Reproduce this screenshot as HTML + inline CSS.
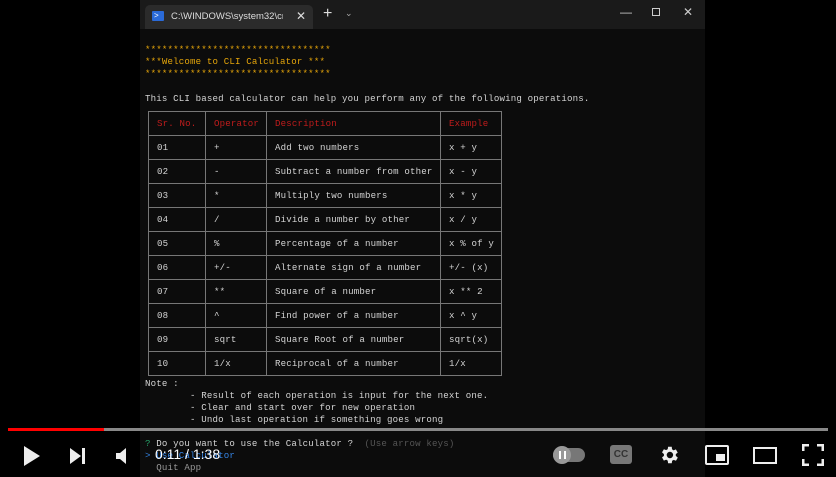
<!DOCTYPE html>
<html><head><meta charset="utf-8"><style>
*{margin:0;padding:0;box-sizing:border-box}
body{width:836px;height:477px;background:#000;overflow:hidden;position:relative;font-family:"Liberation Mono",monospace}
.term{position:absolute;left:140px;top:0;width:565px;height:477px;background:#0c0c0c}
.tabbar{position:absolute;left:140px;top:0;width:565px;height:29px;background:#1a1a1a}
.tab{position:absolute;left:145px;top:5px;width:168px;height:24px;background:#2b2b2b;border-radius:5px 5px 0 0;color:#ddd;font:9.5px "Liberation Sans",sans-serif}
.t{position:absolute;font-size:9.1px;letter-spacing:0.17px;white-space:pre;color:#d4d4d4;line-height:12px}
.y{color:#e5a50a}
.r{color:#c01c1c}
table{position:absolute;left:148px;top:111px;border-collapse:collapse}
td{border:1px solid #777;height:24px;font-size:9.1px;letter-spacing:0.17px;color:#d4d4d4;padding-left:8px;white-space:pre;vertical-align:middle}
.ctl{position:absolute;fill:#eee}
</style></head><body>
<div class="term"></div>
<div class="tabbar"></div>
<div class="tab">
<div style="position:absolute;left:7px;top:6px;width:12px;height:10px;background:#2a6ad8;border-radius:1px;color:#fff;font-size:8px;line-height:10px;padding-left:2px">&gt;</div>
<span style="position:absolute;left:26px;top:6px;width:112px;overflow:hidden;white-space:nowrap">C:\WINDOWS\system32\cmd.</span>
<span style="position:absolute;left:151px;top:4px;font-size:12px">✕</span>
</div>
<span style="position:absolute;left:323px;top:5px;color:#ddd;font:16px 'Liberation Sans',sans-serif">+</span>
<span style="position:absolute;left:345px;top:8px;color:#aaa;font:9px 'Liberation Sans',sans-serif">⌄</span>
<span style="position:absolute;left:620px;top:5px;color:#ccc;font:12px 'Liberation Sans'">—</span>
<div style="position:absolute;left:652px;top:8px;width:8px;height:8px;border:1px solid #ccc"></div>
<span style="position:absolute;left:683px;top:5px;color:#ccc;font:12px 'Liberation Sans'">✕</span>

<div class="t y" style="left:145px;top:44px">*********************************</div>
<div class="t y" style="left:145px;top:56px">***Welcome to CLI Calculator ***</div>
<div class="t y" style="left:145px;top:68px">*********************************</div>
<div class="t" style="left:145px;top:93px">This CLI based calculator can help you perform any of the following operations.</div>

<table>
<tr><td class="r" style="width:57px">Sr. No.</td><td class="r" style="width:61px">Operator</td><td class="r" style="width:174px">Description</td><td class="r" style="width:61px">Example</td></tr>
<tr><td>01</td><td>+</td><td>Add two numbers</td><td>x + y</td></tr>
<tr><td>02</td><td>-</td><td>Subtract a number from other</td><td>x - y</td></tr>
<tr><td>03</td><td>*</td><td>Multiply two numbers</td><td>x * y</td></tr>
<tr><td>04</td><td>/</td><td>Divide a number by other</td><td>x / y</td></tr>
<tr><td>05</td><td>%</td><td>Percentage of a number</td><td>x % of y</td></tr>
<tr><td>06</td><td>+/-</td><td>Alternate sign of a number</td><td>+/- (x)</td></tr>
<tr><td>07</td><td>**</td><td>Square of a number</td><td>x ** 2</td></tr>
<tr><td>08</td><td>^</td><td>Find power of a number</td><td>x ^ y</td></tr>
<tr><td>09</td><td>sqrt</td><td>Square Root of a number</td><td>sqrt(x)</td></tr>
<tr><td>10</td><td>1/x</td><td>Reciprocal of a number</td><td>1/x</td></tr>
</table>

<div class="t" style="left:145px;top:378px">Note :</div>
<div class="t" style="left:145px;top:390px">        - Result of each operation is input for the next one.</div>
<div class="t" style="left:145px;top:402px">        - Clear and start over for new operation</div>
<div class="t" style="left:145px;top:414px">        - Undo last operation if something goes wrong</div>
<div class="t" style="left:145px;top:438px"><span style="color:#26a269">?</span> Do you want to use the Calculator ?  <span style="color:#555">(Use arrow keys)</span></div>
<div class="t" style="left:145px;top:450px;color:#3584e4">&gt; Use Calculator</div>
<div class="t" style="left:145px;top:462px;color:#999">  Quit App</div>

<div style="position:absolute;left:8px;top:428px;width:820px;height:3px;background:#888"></div>
<div style="position:absolute;left:8px;top:428px;width:96px;height:3px;background:#f00"></div>

<svg class="ctl" style="left:22px;top:445px" width="20" height="22"><path d="M2 1 L18 11 L2 21Z"/></svg>
<svg class="ctl" style="left:69px;top:447px" width="18" height="18"><path d="M1 1 L12 9 L1 17Z M13 1h3v16h-3z"/></svg>
<svg class="ctl" style="left:115px;top:447px" width="18" height="18"><path d="M1 6h4l6-5v16l-6-5H1z"/></svg>
<div style="position:absolute;left:155px;top:446px;color:#fff;font:14px 'Liberation Sans',sans-serif">0:11 / 1:38</div>

<div style="position:absolute;left:553px;top:448px;width:32px;height:14px;border-radius:7px;background:#777"></div>
<div style="position:absolute;left:553px;top:446px;width:18px;height:18px;border-radius:9px;background:#999"></div>
<div style="position:absolute;left:559px;top:451px;width:2px;height:8px;background:#fff"></div>
<div style="position:absolute;left:564px;top:451px;width:2px;height:8px;background:#fff"></div>
<div style="position:absolute;left:610px;top:445px;width:22px;height:19px;border-radius:3px;background:#777;color:#333;font:bold 10px 'Liberation Sans';text-align:center;line-height:19px">CC</div>
<svg class="ctl" style="left:658px;top:444px" width="22" height="22" viewBox="0 0 24 24"><path d="M19.4 13a7.5 7.5 0 0 0 0-2l2.1-1.6-2-3.5-2.5 1a7 7 0 0 0-1.7-1L15 3h-4l-.4 2.700a7 7 0 0 0-1.7 1l-2.5-1-2 3.5L6.5 11a7.5 7.5 0 0 0 0 2l-2.1 1.6 2 3.5 2.5-1a7 7 0 0 0 1.7 1L11 21h4l.4-2.7a7 7 0 0 0 1.7-1l2.5 1 2-3.5zM13 15.5a3.5 3.5 0 1 1 0-7 3.5 3.5 0 0 1 0 7z"/></svg>
<div style="position:absolute;left:705px;top:445px;width:24px;height:20px;border:2px solid #eee;border-radius:2px"></div>
<div style="position:absolute;left:716px;top:454px;width:9px;height:7px;background:#eee"></div>
<div style="position:absolute;left:753px;top:447px;width:24px;height:17px;border:2px solid #eee"></div>
<svg style="position:absolute;left:802px;top:444px" width="22" height="22"><path d="M1 7V1h6M15 1h6v6M21 15v6h-6M7 21H1v-6" stroke="#eee" stroke-width="3" fill="none"/></svg>
</body></html>
